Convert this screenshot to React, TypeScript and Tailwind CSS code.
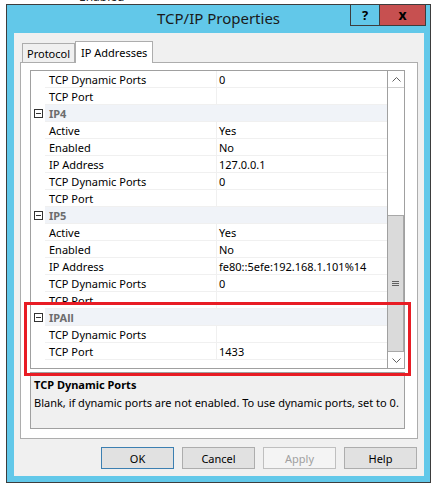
import React from "react";

type Row =
  | { kind: "cat"; label: string }
  | { kind: "prop"; name: string; value: string };

const rows: Row[] = [
  { kind: "prop", name: "TCP Dynamic Ports", value: "0" },
  { kind: "prop", name: "TCP Port", value: "" },
  { kind: "cat", label: "IP4" },
  { kind: "prop", name: "Active", value: "Yes" },
  { kind: "prop", name: "Enabled", value: "No" },
  { kind: "prop", name: "IP Address", value: "127.0.0.1" },
  { kind: "prop", name: "TCP Dynamic Ports", value: "0" },
  { kind: "prop", name: "TCP Port", value: "" },
  { kind: "cat", label: "IP5" },
  { kind: "prop", name: "Active", value: "Yes" },
  { kind: "prop", name: "Enabled", value: "No" },
  { kind: "prop", name: "IP Address", value: "fe80::5efe:192.168.1.101%14" },
  { kind: "prop", name: "TCP Dynamic Ports", value: "0" },
  { kind: "prop", name: "TCP Port", value: "" },
  { kind: "cat", label: "IPAll" },
  { kind: "prop", name: "TCP Dynamic Ports", value: "" },
  { kind: "prop", name: "TCP Port", value: "1433" },
];

function CollapseBox() {
  return (
    <div className="w-[9px] h-[9px] border border-[#333] flex items-center justify-center bg-white">
      <div className="w-[5px] h-px bg-[#333]" />
    </div>
  );
}

function GridRow({ row }: { row: Row }) {
  if (row.kind === "cat") {
    return (
      <div className="flex h-[17px]">
        <div className="w-[14px] shrink-0 flex items-center justify-center bg-white">
          <CollapseBox />
        </div>
        <div className="flex-1 bg-[#f0f3f8] border-b border-[#f0f0f0] pl-[4px] flex items-center font-bold text-[#6d6d6d]">
          {row.label}
        </div>
      </div>
    );
  }
  return (
    <div className="flex h-[17px]">
      <div className="w-[14px] shrink-0 bg-white" />
      <div className="w-[172px] shrink-0 border-b border-r border-[#f0f0f0] pl-[4px] flex items-center whitespace-nowrap">
        {row.name}
      </div>
      <div className="flex-1 border-b border-[#f0f0f0] pl-[2px] flex items-center whitespace-nowrap">
        {row.value}
      </div>
    </div>
  );
}

function Chevron({ up }: { up?: boolean }) {
  return (
    <svg width="9" height="5" viewBox="0 0 9 5" fill="none" stroke="#606060" strokeWidth="1">
      {up ? <polyline points="0.5,4.5 4.5,0.5 8.5,4.5" /> : <polyline points="0.5,0.5 4.5,4.5 8.5,0.5" />}
    </svg>
  );
}

function Scrollbar() {
  return (
    <div className="w-[17px] shrink-0 border-l border-[#a0a0a0] flex flex-col bg-white">
      <div className="h-[17px] border-b border-[#cfcfcf] flex items-center justify-center">
        <Chevron up />
      </div>
      <div className="flex-1 flex flex-col">
        <div className="h-[127px] bg-white" />
        <div className="flex-1 bg-[#dadada] border border-[#a8a8a8] border-l-0 flex items-center justify-center">
          <div className="flex flex-col gap-[1px]">
            <div className="w-[7px] h-px bg-[#606060]" />
            <div className="w-[7px] h-px bg-[#606060]" />
            <div className="w-[7px] h-px bg-[#606060]" />
          </div>
        </div>
      </div>
      <div className="h-[16px] flex items-center justify-center">
        <Chevron />
      </div>
    </div>
  );
}

function DlgButton({ label, def, disabled }: { label: string; def?: boolean; disabled?: boolean }) {
  return (
    <div
      className={
        "w-[73px] h-[22px] flex items-center justify-center border " +
        (disabled
          ? "bg-[#f4f4f4] border-[#bfbfbf] text-[#a0a0a0]"
          : def
          ? "bg-[#e1e1e1] border-[#3c7fb1] text-black"
          : "bg-[#e1e1e1] border-[#adadad] text-black")
      }
    >
      {label}
    </div>
  );
}

export default function App() {
  return (
    <div className="relative w-[432px] h-[489px] bg-white overflow-hidden font-['Noto_Sans',sans-serif] text-[11px] text-black leading-none">
      <div className="relative h-[4px] overflow-hidden">
        <span className="absolute left-[79px] -top-[9px] text-[12px] text-[#222]">Enabled</span>
      </div>
      <div className="pl-[6px]">
        <div className="w-[425px] h-[479px] border border-[#3d3d3d] bg-[#62c8e9] flex flex-col">
          {/* title bar */}
          <div className="grid grid-cols-[1fr_auto_1fr] h-[28px]">
            <div />
            <div className="self-center text-[15px] text-[#1a1a1a] -mt-[1px]">TCP/IP Properties</div>
            <div className="flex justify-end items-start pr-[4px] -mt-px">
              <div className="w-[30px] h-[22px] border border-[#3d3d3d] flex items-center justify-center font-bold text-[13px]">
                ?
              </div>
              <div className="w-[46px] h-[22px] bg-[#c75050] border-y border-r border-[#3d3d3d] flex items-center justify-center font-bold text-[14px] pb-px">
                x
              </div>
            </div>
          </div>
          {/* client area */}
          <div className="ml-[7px] mr-[6px] h-[443px] bg-[#f0f0f0] flex flex-col px-[6px] pt-[8px]">
            {/* tabs */}
            <div className="flex items-end h-[21px] pl-[2px]">
              <div className="h-[19px] px-[4px] border border-b-0 border-[#adadad] bg-[#f0f0f0] flex items-center text-[11px]">
                Protocol
              </div>
              <div className="h-[22px] -mb-px relative z-10 px-[5px] border border-b-0 border-[#adadad] bg-white flex items-center text-[11px]">
                IP Addresses
              </div>
            </div>
            {/* tab panel */}
            <div className="h-[377px] border border-[#adadad] bg-white pt-[7px] pl-[9px] pr-[12px] flex flex-col">
              <div className="h-[299px] border border-[#a0a0a0] flex">
                <div className="flex-1 flex flex-col">
                  {rows.map((r, i) => (
                    <GridRow key={i} row={r} />
                  ))}
                  <div className="flex-1 flex">
                    <div className="w-[14px]" />
                    <div className="flex-1" />
                  </div>
                </div>
                <Scrollbar />
              </div>
              <div className="mt-[3px] h-[57px] border border-[#a0a0a0] bg-[#f0f0f0] px-[3px] pt-[6px] flex flex-col gap-[7px]">
                <div className="font-bold text-[11px]">TCP Dynamic Ports</div>
                <div className="text-[11px] whitespace-nowrap">
                  Blank, if dynamic ports are not enabled. To use dynamic ports, set to 0.
                </div>
              </div>
            </div>
            {/* buttons */}
            <div className="flex justify-end gap-[8px] mt-[8px] pr-px">
              <DlgButton label="OK" def />
              <DlgButton label="Cancel" />
              <DlgButton label="Apply" disabled />
              <DlgButton label="Help" />
            </div>
          </div>
        </div>
      </div>
      {/* red highlight annotation */}
      <div className="absolute left-[24px] top-[302px] w-[387px] h-[74px] border-[3px] border-[#e81c24] pointer-events-none" />
    </div>
  );
}
